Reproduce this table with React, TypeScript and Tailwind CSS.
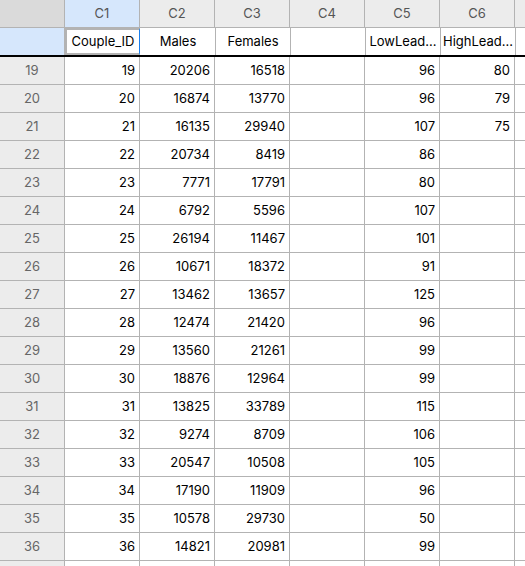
const rows: (string | number)[][] = [
  [19, 20206, 16518, "", 96, 80],
  [20, 16874, 13770, "", 96, 79],
  [21, 16135, 29940, "", 107, 75],
  [22, 20734, 8419, "", 86, ""],
  [23, 7771, 17791, "", 80, ""],
  [24, 6792, 5596, "", 107, ""],
  [25, 26194, 11467, "", 101, ""],
  [26, 10671, 18372, "", 91, ""],
  [27, 13462, 13657, "", 125, ""],
  [28, 12474, 21420, "", 96, ""],
  [29, 13560, 21261, "", 99, ""],
  [30, 18876, 12964, "", 99, ""],
  [31, 13825, 33789, "", 115, ""],
  [32, 9274, 8709, "", 106, ""],
  [33, 20547, 10508, "", 105, ""],
  [34, 17190, 11909, "", 96, ""],
  [35, 10578, 29730, "", 50, ""],
  [36, 14821, 20981, "", 99, ""],
]

const cols = ["C1", "C2", "C3", "C4", "C5", "C6"]
const names = ["Couple_ID", "Males", "Females", "", "LowLead...", "HighLead..."]

export default function App() {
  return (
    <div
      className="w-[525px] h-[566px] overflow-hidden bg-white text-[13px] text-black"
      style={{ fontFamily: "Inter, 'Liberation Sans', sans-serif" }}
    >
      {/* column letters */}
      <div className="flex h-[28px] border-b border-[#b3b3b3]">
        <div className="w-[65px] shrink-0 bg-[#dadada] border-r border-[#b3b3b3]" />
        {cols.map((c, i) => (
          <div
            key={c}
            className={
              "w-[75px] shrink-0 border-r border-[#b3b3b3] flex items-center justify-center text-[#555] " +
              (i === 0 ? "bg-[#d6e7fc]" : "bg-[#ececec]")
            }
          >
            {c}
          </div>
        ))}
        <div className="flex-1 bg-[#ececec]" />
      </div>

      {/* variable names */}
      <div className="flex h-[29px] border-b-2 border-black">
        <div className="w-[65px] shrink-0 bg-[#d6e7fc] border-r border-[#b3b3b3]" />
        {names.map((n, i) => (
          <div
            key={i}
            className={
              "w-[75px] shrink-0 border-r border-[#b3b3b3] flex items-center justify-center whitespace-nowrap " +
              (i === 0 ? "border-2 border-[#1b7fec] border-r-[#1b7fec] mr-px w-[74px]" : "")
            }
          >
            {n}
          </div>
        ))}
        <div className="flex-1" />
      </div>

      {rows.map((r) => (
        <div key={r[0]} className="flex h-[28px] border-b border-[#b3b3b3]">
          <div className="w-[65px] shrink-0 bg-[#ececec] border-r border-[#b3b3b3] flex items-center justify-center text-[#666]">
            {r[0]}
          </div>
          {r.map((v, i) => (
            <div
              key={i}
              className="w-[75px] shrink-0 border-r border-[#b3b3b3] flex items-center justify-end pr-[4px]"
            >
              {v}
            </div>
          ))}
          <div className="flex-1" />
        </div>
      ))}

      <div className="flex h-[28px]">
        <div className="w-[65px] shrink-0 bg-[#ececec] border-r border-[#b3b3b3]" />
        {cols.map((c) => (
          <div key={c} className="w-[75px] shrink-0 border-r border-[#b3b3b3]" />
        ))}
      </div>
    </div>
  )
}
